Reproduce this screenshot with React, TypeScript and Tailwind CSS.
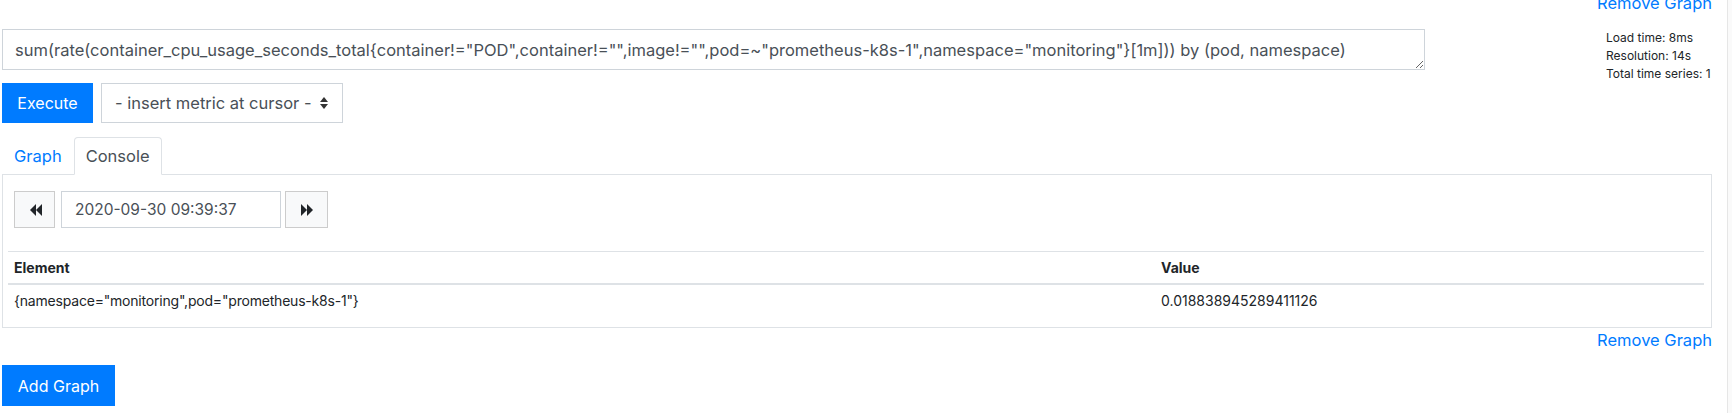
import React from "react";

const QUERY =
  'sum(rate(container_cpu_usage_seconds_total{container!="POD",container!="",image!="",pod=~"prometheus-k8s-1",namespace="monitoring"}[1m])) by (pod, namespace)';

function Backward() {
  return (
    <svg width="12" height="12" viewBox="0 0 12 12" aria-hidden="true" className="ml-[2px]">
      <polygon points="6,0 0,6 6,12" fill="#212529" />
      <polygon points="12,0 6,6 12,12" fill="#212529" />
    </svg>
  );
}

function Forward() {
  return (
    <svg width="12" height="12" viewBox="0 0 12 12" aria-hidden="true">
      <polygon points="0,0 6,6 0,12" fill="#212529" />
      <polygon points="6,0 12,6 6,12" fill="#212529" />
    </svg>
  );
}

function UpDown() {
  return (
    <svg width="8" height="12" viewBox="0 0 8 12" aria-hidden="true">
      <polygon points="4,0 8,5 0,5" fill="#333" />
      <polygon points="0,7 8,7 4,12" fill="#333" />
    </svg>
  );
}

export default function App() {
  return (
    <div
      className="flex h-[413px] w-full overflow-hidden bg-white text-[#212529]"
      style={{ fontFamily: "Inter, 'Liberation Sans', sans-serif" }}
    >
      <div className="w-[1727px] shrink-0 pl-[2px] pr-[15px]">
        {/* top remove graph (scrolled partially off) */}
        <div className="flex h-[29px] justify-end">
          <span className="-mt-[9px] text-[16.5px] leading-6 text-[#007bff]">Remove Graph</span>
        </div>

        {/* expression row */}
        <div className="flex">
          <div className="w-[1423px]">
            <textarea
              readOnly
              value={QUERY}
              rows={1}
              className="block h-[41px] w-full resize-y border border-[#ced4da] px-[12px] py-[8px] text-[16.5px] leading-6 text-[#495057] outline-none"
            />
            <div className="mt-[13px] flex gap-[8px]">
              <button className="h-[40px] w-[91px] bg-[#007bff] text-[16px] text-white">Execute</button>
              <div className="flex h-[40px] w-[242px] items-center justify-between border border-[#ced4da] pl-[13px] pr-[14px] text-[16.5px] text-[#495057]">
                <span>- insert metric at cursor -</span>
                <UpDown />
              </div>
            </div>
          </div>
          <div className="ml-[181px] text-[12px] leading-[18px] text-[#212529]">
            <div>Load time: 8ms</div>
            <div>Resolution: 14s</div>
            <div>Total time series: 1</div>
          </div>
        </div>

        {/* tabs */}
        <div className="mt-[14px] flex border-b border-[#dee2e6]">
          <div className="-mb-px flex h-[38px] items-center border border-transparent px-[11px] text-[16.5px] text-[#007bff]">
            Graph
          </div>
          <div className="-mb-px flex h-[38px] items-center rounded-t-[4px] border border-[#dee2e6] border-b-white bg-white px-[11px] text-[16.5px] text-[#495057]">
            Console
          </div>
        </div>

        {/* panel */}
        <div className="border border-t-0 border-[#dee2e6] px-[5px] pb-[11px] pt-[16px]">
          <div className="flex pl-[6px]">
            <button className="flex h-[37px] w-[41px] items-center justify-center border border-[#ccc] bg-[#f8f9fa]">
              <Backward />
            </button>
            <div className="ml-[6px] flex h-[37px] w-[220px] items-center border border-[#ced4da] pl-[13px] text-[15.5px] text-[#495057]">
              2020-09-30 09:39:37
            </div>
            <button className="ml-[4px] flex h-[37px] w-[43px] items-center justify-center border border-[#ccc] bg-[#f8f9fa]">
              <Forward />
            </button>
          </div>

          <table className="mt-[23px] w-[1696px] table-fixed border-collapse text-[14px] leading-[21px]">
            <colgroup>
              <col className="w-[1147px]" />
              <col />
            </colgroup>
            <thead>
              <tr>
                <th className="border-b-2 border-t border-[#dee2e6] px-[6px] py-[5px] text-left font-bold">Element</th>
                <th className="border-b-2 border-t border-[#dee2e6] px-[6px] py-[5px] text-left font-bold">Value</th>
              </tr>
            </thead>
            <tbody>
              <tr>
                <td className="px-[6px] py-[5px] tracking-[-0.2px]">{'{namespace="monitoring",pod="prometheus-k8s-1"}'}</td>
                <td className="px-[6px] py-[5px]">0.018838945289411126</td>
              </tr>
            </tbody>
          </table>
        </div>

        <div className="flex justify-end">
          <span className="text-[16.5px] leading-6 text-[#007bff]">Remove Graph</span>
        </div>

        <button className="mt-[13px] h-[41px] w-[113px] bg-[#007bff] text-[16px] text-white">Add Graph</button>
      </div>
      <div className="flex-1 border-l border-[#e6e6e6] bg-[#fafafa]" />
    </div>
  );
}
